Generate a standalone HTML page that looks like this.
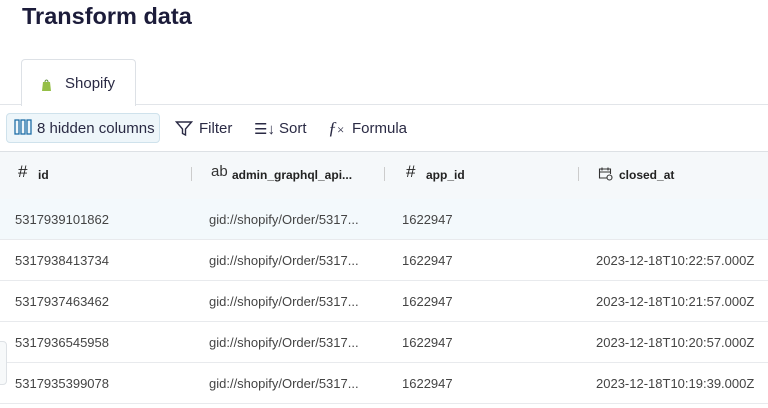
<!DOCTYPE html>
<html><head><style>
body{margin:0;width:768px;height:408px;overflow:hidden;background:#fff;font-family:"Liberation Sans",sans-serif;color:#222;position:relative}
.a{position:absolute}
h1{position:absolute;left:22px;top:3px;margin:0;font-size:23.5px;font-weight:bold;color:#1c1c3a}
.tab{left:21px;top:59px;width:113px;height:46px;border:1px solid #dde1e6;border-bottom:none;border-radius:4px 4px 0 0;background:#fff;font-size:15px;color:#2a2a44}
.tb{font-size:15px;color:#2a2a44;top:120px}
.row{left:0;width:768px;height:40px;border-bottom:1px solid #e8eaed;font-size:13px;color:#444}
.row span{position:absolute;top:13px}
.hd{font-size:12px;font-weight:bold;color:#222;top:168px}
.sep{top:167px;width:1px;height:14px;background:#ccc}
</style></head><body>
<h1>Transform data</h1>
<div class="a" style="left:0;top:104px;width:768px;height:1px;background:#e2e5e9"></div>
<div class="a tab"><svg class="a" style="left:19px;top:19px" width="11" height="12" viewBox="0 0 11 12"><path d="M2 3h7l1 9H1z" fill="#95bf47"/><path d="M4 3a1.5 2 0 0 1 3 0" stroke="#5e8e3e" fill="none"/></svg><span class="a" style="left:43px;top:15px">Shopify</span></div>
<div class="a" style="left:6px;top:113px;width:152px;height:28px;border:1px solid #cfe2ec;background:#eef6fa;border-radius:4px"></div>
<svg class="a" style="left:14px;top:119px" width="18" height="16" viewBox="0 0 18 16"><g fill="none" stroke="#1f6fa8" stroke-width="1.3"><rect x="1" y="1" width="4" height="14"/><rect x="7" y="1" width="4" height="14"/><rect x="13" y="1" width="4" height="14"/></g></svg>
<span class="a tb" style="left:37px">8 hidden columns</span>
<svg class="a" style="left:175px;top:120px" width="18" height="18" viewBox="0 0 18 18"><path d="M1.5 2h15l-6 7v6l-3-1.5V9z" fill="none" stroke="#2a2a44" stroke-width="1.4"/></svg>
<span class="a tb" style="left:199px">Filter</span>
<span class="a tb" style="left:254px;font-size:15px">☰↓</span>
<span class="a tb" style="left:279px">Sort</span>
<span class="a tb" style="left:328px;top:118px;font-style:italic;font-size:18px;font-family:'Liberation Serif',serif">ƒ<span style="font-size:13px;font-style:normal">×</span></span>
<span class="a tb" style="left:352px">Formula</span>
<div class="a" style="left:0;top:151px;width:768px;height:47px;background:#f5f8fa;border-top:1px solid #dde1e5;border-bottom:1px solid #dde1e5"></div>
<span class="a" style="left:18px;top:162px;font-size:17px">#</span><span class="a hd" style="left:38px">id</span>
<div class="a sep" style="left:191px"></div>
<span class="a" style="left:211px;top:163px;font-size:15px;color:#333">ab</span><span class="a hd" style="left:232px">admin_graphql_api...</span>
<div class="a sep" style="left:384px"></div>
<span class="a" style="left:406px;top:162px;font-size:17px">#</span><span class="a hd" style="left:426px">app_id</span>
<div class="a sep" style="left:578px"></div>
<svg class="a" style="left:598px;top:166px" width="15" height="15" viewBox="0 0 15 15"><g fill="none" stroke="#333" stroke-width="1.1"><path d="M9 12H1.5V3h11v5M1.5 6h11M4 1.5v3M10 1.5v3"/><circle cx="11.5" cy="11.5" r="2.5"/></g></svg><span class="a hd" style="left:619px">closed_at</span>
<div class="a row" style="top:199px;background:#f3f9fc"><span style="left:15px">5317939101862</span><span style="left:209px">gid://shopify/Order/5317...</span><span style="left:402px">1622947</span></div>
<div class="a row" style="top:240px"><span style="left:15px">5317938413734</span><span style="left:209px">gid://shopify/Order/5317...</span><span style="left:402px">1622947</span><span style="left:596px">2023-12-18T10:22:57.000Z</span></div>
<div class="a row" style="top:281px"><span style="left:15px">5317937463462</span><span style="left:209px">gid://shopify/Order/5317...</span><span style="left:402px">1622947</span><span style="left:596px">2023-12-18T10:21:57.000Z</span></div>
<div class="a row" style="top:322px"><span style="left:15px">5317936545958</span><span style="left:209px">gid://shopify/Order/5317...</span><span style="left:402px">1622947</span><span style="left:596px">2023-12-18T10:20:57.000Z</span></div>
<div class="a row" style="top:363px"><span style="left:15px">5317935399078</span><span style="left:209px">gid://shopify/Order/5317...</span><span style="left:402px">1622947</span><span style="left:596px">2023-12-18T10:19:39.000Z</span></div>
<div class="a" style="left:-4px;top:341px;width:9px;height:42px;border:1px solid #dde1e5;border-radius:4px;background:#f7f9fa"></div>
</body></html>
